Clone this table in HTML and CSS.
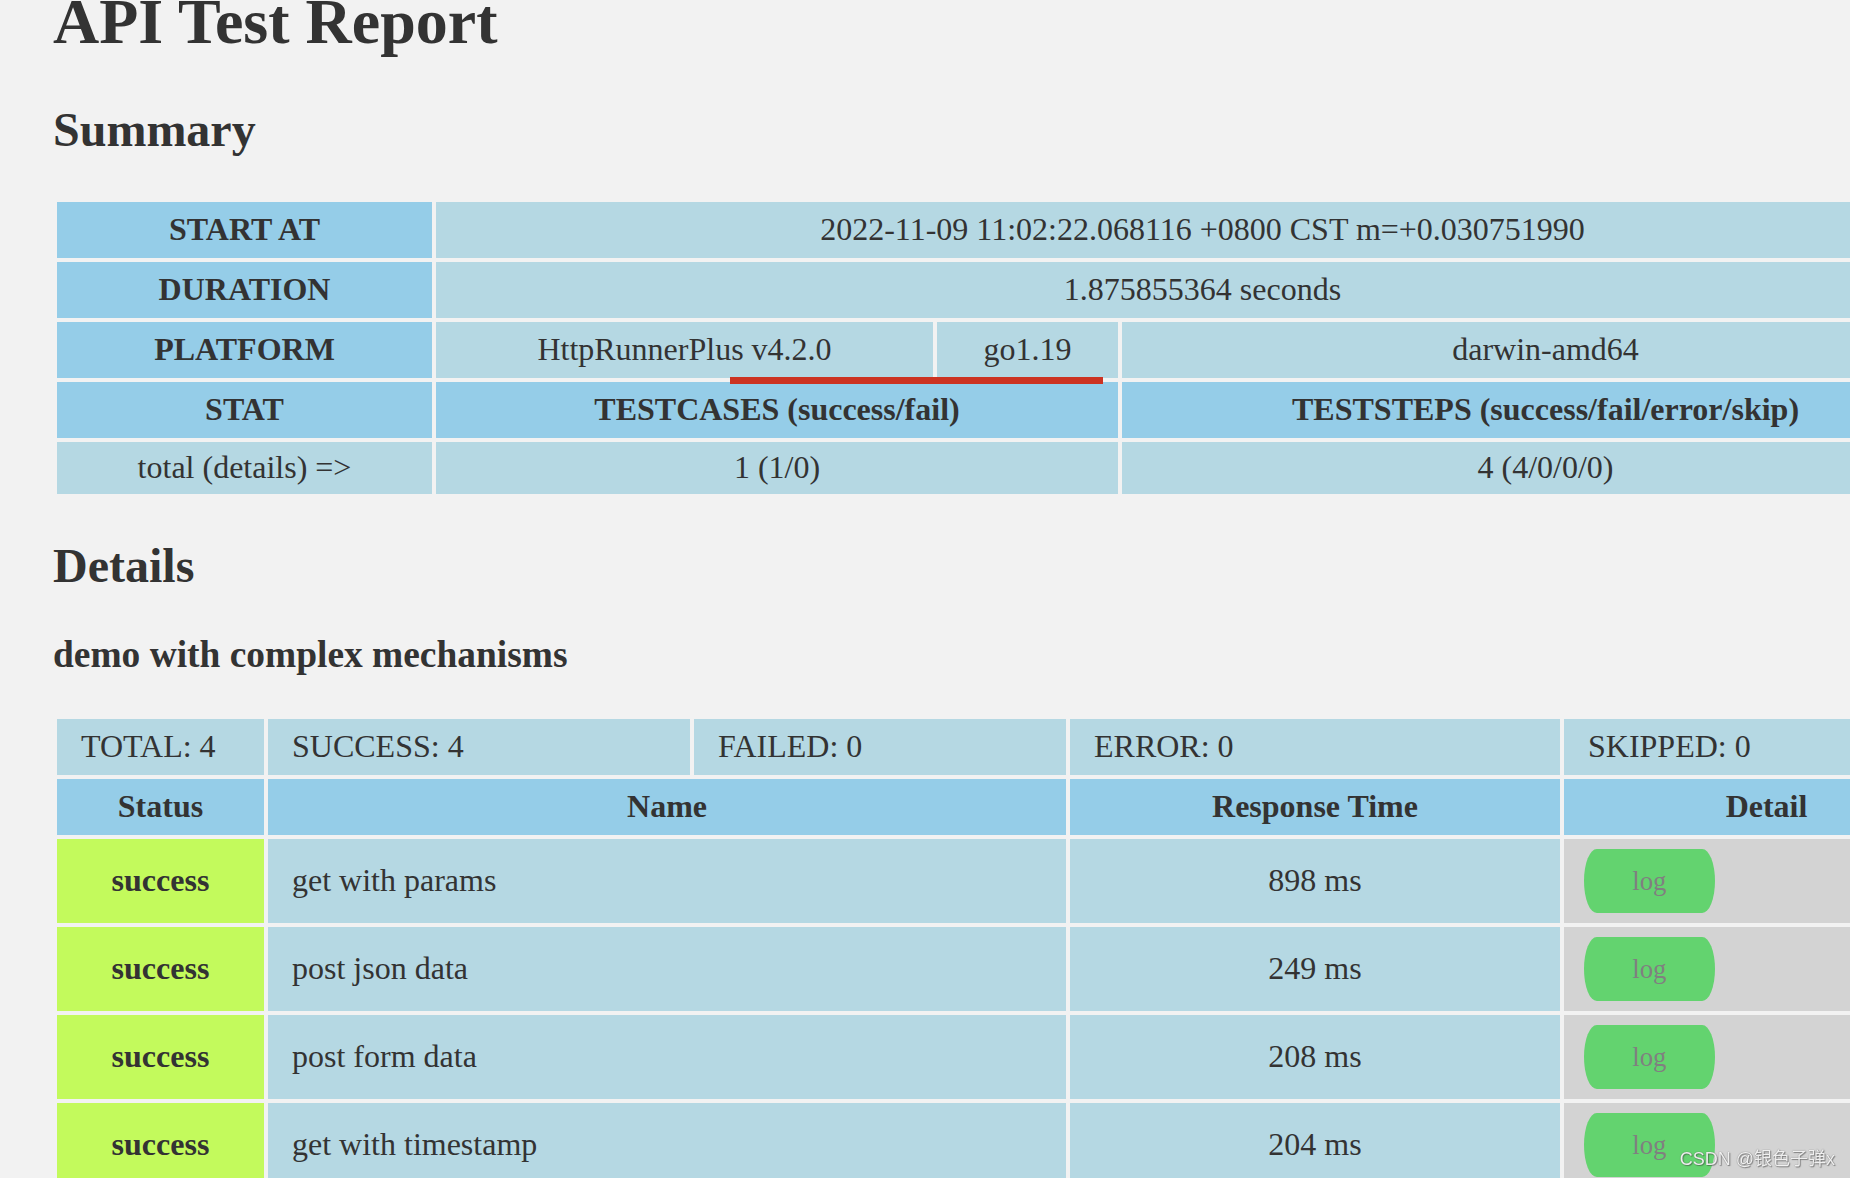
FILE: index.html
```html
<!DOCTYPE html>
<html lang="en">
<head>
<meta charset="utf-8">
<title>API Test Report</title>
<link rel="stylesheet" href="styles.css">
</head>
<body>
  <h1 class="page-title">API Test Report</h1>

  <h2 class="section-title">Summary</h2>
  <div class="summary-wrap">
    <table class="summary">
      <colgroup>
        <col class="s-c1"><col class="s-c2"><col class="s-c3"><col class="s-c4"><col class="s-c5">
      </colgroup>
      <tr>
        <th>START AT</th>
        <td colspan="4">2022-11-09 11:02:22.068116 +0800 CST m=+0.030751990</td>
      </tr>
      <tr>
        <th>DURATION</th>
        <td colspan="4">1.875855364 seconds</td>
      </tr>
      <tr>
        <th>PLATFORM</th>
        <td>HttpRunnerPlus v4.2.0</td>
        <td>go1.19</td>
        <td colspan="2">darwin-amd64</td>
      </tr>
      <tr>
        <th>STAT</th>
        <th colspan="2">TESTCASES (success/fail)</th>
        <th colspan="2">TESTSTEPS (success/fail/error/skip)</th>
      </tr>
      <tr>
        <td>total (details) =&gt;</td>
        <td colspan="2">1 (1/0)</td>
        <td colspan="2">4 (4/0/0/0)</td>
      </tr>
    </table>
    <div class="annotation-bar"></div>
  </div>

  <h2 class="section-title section-title--details">Details</h2>
  <h3 class="suite-title">demo with complex mechanisms</h3>
  <table class="details">
    <colgroup>
      <col class="d-c1"><col class="d-c2"><col class="d-c3"><col class="d-c4"><col class="d-c5">
    </colgroup>
    <tr>
      <td>TOTAL: 4</td>
      <td>SUCCESS: 4</td>
      <td>FAILED: 0</td>
      <td>ERROR: 0</td>
      <td>SKIPPED: 0</td>
    </tr>
    <tr>
      <th>Status</th>
      <th colspan="2">Name</th>
      <th>Response Time</th>
      <th>Detail</th>
    </tr>
    <tr>
      <th class="success">success</th>
      <td colspan="2">get with params</td>
      <td class="centered">898 ms</td>
      <td class="detail"><a class="button">log</a></td>
    </tr>
    <tr>
      <th class="success">success</th>
      <td colspan="2">post json data</td>
      <td class="centered">249 ms</td>
      <td class="detail"><a class="button">log</a></td>
    </tr>
    <tr>
      <th class="success">success</th>
      <td colspan="2">post form data</td>
      <td class="centered">208 ms</td>
      <td class="detail"><a class="button">log</a></td>
    </tr>
    <tr>
      <th class="success">success</th>
      <td colspan="2">get with timestamp</td>
      <td class="centered">204 ms</td>
      <td class="detail"><a class="button">log</a></td>
    </tr>
  </table>

  <div class="watermark">CSDN @银色子弹x</div>
</body>
</html>
```

FILE: styles.css
```css
html {
  overflow: hidden;
  background: #f2f2f2;
}

body {
  margin: 0 0 0 53px;
  width: 1920px;
  background: #f2f2f2;
  color: #333333;
  font-family: "Liberation Serif", "Times New Roman", serif;
  font-size: 32px;
}

.page-title {
  font-size: 64px;
  line-height: 74px;
  font-weight: bold;
  margin: -15px 0 43px;
}

.section-title {
  font-size: 48px;
  line-height: 56px;
  font-weight: bold;
  margin: 40px 0;
}

.section-title--details {
  margin-bottom: 39px;
}

.suite-title {
  font-size: 37.44px;
  line-height: 43px;
  font-weight: bold;
  margin: 0 0 39px;
}

.summary-wrap {
  position: relative;
  margin-bottom: 40px;
}

table {
  width: 1920px;
  table-layout: fixed;
  border-spacing: 4px;
  border-collapse: separate;
}

th, td {
  line-height: 36px;
  vertical-align: middle;
}

th {
  font-weight: bold;
  text-align: center;
  background: #95cde8;
  padding: 9px 24px 11px;
}

.summary td {
  background: #b5d8e3;
  text-align: center;
  padding: 7px 16px 9px;
}

.s-c1 { width: 375px; }
.s-c2 { width: 497px; }
.s-c3 { width: 181px; }
.s-c4 { width: 421px; }
.s-c5 { width: 422px; }

.d-c1 { width: 207px; }
.d-c2 { width: 422px; }
.d-c3 { width: 372px; }
.d-c4 { width: 490px; }
.d-c5 { width: 405px; }

.details td {
  background: #b5d8e3;
  text-align: left;
  padding: 9px 24px 11px;
}

.details .centered {
  text-align: center;
}

.details .success {
  background: #c3fa5c;
}

.details .detail {
  background: #d3d3d3;
  font-size: 26.67px;
  line-height: 40px;
  padding: 10px 20px;
  text-align: left;
}

.button {
  display: inline-block;
  font-size: 1em;
  width: 4em;
  padding: 12px;
  text-align: center;
  background: #63d36f;
  color: #808080;
  text-decoration: none;
  border-radius: 40px / 100px;
}

.annotation-bar {
  position: absolute;
  left: 677px;
  top: 179px;
  width: 373px;
  height: 7px;
  background: #cc3322;
}

.watermark {
  position: fixed;
  right: 15px;
  bottom: 9px;
  font-family: "Liberation Sans", "Noto Sans CJK SC", sans-serif;
  font-size: 18px;
  line-height: 20px;
  color: rgba(255, 255, 255, 0.9);
  text-shadow: 0 0 1px rgba(60, 60, 60, 0.8), 1px 1px 1px rgba(60, 60, 60, 0.5);
}
```
